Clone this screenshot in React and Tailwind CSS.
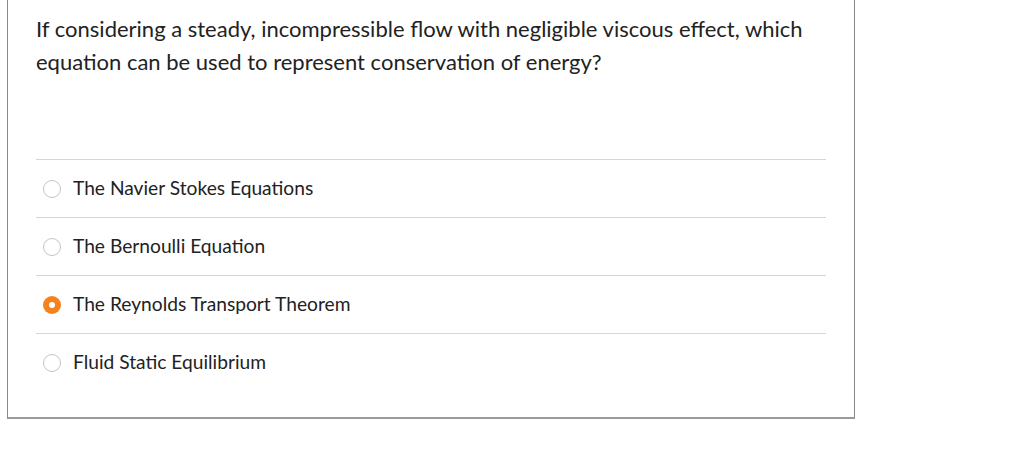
const QUESTION =
  'If considering a steady, incompressible flow with negligible viscous effect, which equation can be used to represent conservation of energy?';

const OPTIONS = [
  'The Navier Stokes Equations',
  'The Bernoulli Equation',
  'The Reynolds Transport Theorem',
  'Fluid Static Equilibrium',
];

const SELECTED = 2;

function Radio({ checked }) {
  if (checked) {
    return (
      <span className="flex h-[18px] w-[18px] shrink-0 items-center justify-center rounded-full bg-[#f5821f]">
        <span className="h-[6px] w-[6px] rounded-full bg-white" />
      </span>
    );
  }
  return <span className="h-[18px] w-[18px] shrink-0 rounded-full border border-[#c4c4c4] bg-white" />;
}

export default function App() {
  return (
    <div className="h-[464px] w-[1024px] bg-white font-['Lato',sans-serif] text-[#2d3b45]">
      <div className="ml-[7px] flex h-[419px] w-[848px] flex-col border-x border-b-2 border-x-[#8a8a8a] border-b-[#9a9a9a] px-[28px] pt-[12px]">
        <p className="text-[22px] leading-[33px] text-[#222]">{QUESTION}</p>
        <div className="mt-[81px]">
          {OPTIONS.map((o, i) => (
            <div
              key={o}
              className="flex h-[58px] items-center gap-[12px] border-t border-[#d6d6d6] pl-[7px] text-[19.2px] text-[#222]"
            >
              <Radio checked={i === SELECTED} />
              <span>{o}</span>
            </div>
          ))}
        </div>
      </div>
    </div>
  );
}
